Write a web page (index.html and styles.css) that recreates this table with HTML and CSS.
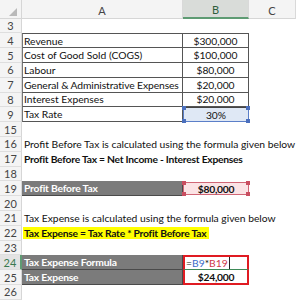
FILE: index.html
```html
<!DOCTYPE html>
<html>
<head>
<meta charset="utf-8">
<link rel="stylesheet" href="styles.css">
</head>
<body>
<div class="sheet">
  <div class="corner"><svg class="tri" width="8" height="8" viewBox="0 0 8 8"><polygon points="8,0 8,8 0,8" fill="#b9b9b9"/></svg></div>
  <div class="colhead">A</div>
  <div class="colhead sel">B</div>
  <div class="colhead">C</div>

  <div class="rh">3</div><div class="c"></div><div class="c"></div><div class="c"></div>
  <div class="rh">4</div><div class="c t la first">Revenue</div><div class="c t first num">$300,000</div><div class="c"></div>
  <div class="rh">5</div><div class="c t la">Cost of Good Sold (COGS)</div><div class="c t num">$100,000</div><div class="c"></div>
  <div class="rh">6</div><div class="c t la">Labour</div><div class="c t num">$80,000</div><div class="c"></div>
  <div class="rh">7</div><div class="c t la tight">General &amp; Administrative Expenses</div><div class="c t num">$20,000</div><div class="c"></div>
  <div class="rh">8</div><div class="c t la">Interest Expenses</div><div class="c t num">$20,000</div><div class="c"></div>
  <div class="rh">9</div><div class="c t la">Tax Rate</div><div class="c num ref-blue">30%<i class="h tl"></i><i class="h tr"></i><i class="h bl"></i><i class="h br"></i></div><div class="c"></div>
  <div class="rh">15</div><div class="c"></div><div class="c"></div><div class="c"></div>
  <div class="rh">16</div><div class="c over">Profit Before Tax is calculated using the formula given below</div><div class="c"></div><div class="c"></div>
  <div class="rh">17</div><div class="c over b">Profit Before Tax = Net Income - Interest Expenses</div><div class="c"></div><div class="c"></div>
  <div class="rh">18</div><div class="c"></div><div class="c"></div><div class="c"></div>
  <div class="rh">19</div><div class="c dark">Profit Before Tax</div><div class="c num b ref-red">$80,000<i class="h tl"></i><i class="h tr"></i><i class="h bl"></i><i class="h br"></i></div><div class="c"></div>
  <div class="rh">20</div><div class="c"></div><div class="c"></div><div class="c"></div>
  <div class="rh">21</div><div class="c over">Tax Expense is calculated using the formula given below</div><div class="c"></div><div class="c"></div>
  <div class="rh">22</div><div class="c over b"><span class="hl">Tax Expense = Tax Rate * Profit Before Tax</span></div><div class="c"></div><div class="c"></div>
  <div class="rh">23</div><div class="c"></div><div class="c"></div><div class="c"></div>
  <div class="rh active">24</div><div class="c dark">Tax Expense Formula</div><div class="c formula red-top"><span class="k">=</span><span class="blue">B9</span><span class="k">*</span><span class="red">B19</span><span class="caret"></span></div><div class="c"></div>
  <div class="rh">25</div><div class="c dark">Tax Expense</div><div class="c num b red-bottom">$24,000</div><div class="c"></div>
  <div class="rh">26</div><div class="c"></div><div class="c"></div><div class="c"></div>
</div>
</body>
</html>
```

FILE: styles.css
```css
html, body {
  margin: 0;
  padding: 0;
  background: #fff;
}
.sheet {
  display: grid;
  grid-template-columns: 22px 161px 66px 47px;
  grid-template-rows: 18.6px repeat(19, 14.8px);
  font-family: "Lato", "Liberation Sans", sans-serif;
  font-size: 10.3px;
  color: #111;
  width: 296px;
  overflow: hidden;
}
.corner {
  background: #f4f4f4;
  border-right: 1px solid #d6d6d6;
  border-bottom: 1px solid #d6d6d6;
  display: flex;
  align-items: flex-end;
  justify-content: flex-end;
  padding: 0 4px 2px 0;
  box-sizing: border-box;
}
.colhead {
  background: #f4f4f4;
  border-right: 1px solid #d9d9d9;
  border-bottom: 1px solid #d6d6d6;
  box-sizing: border-box;
  display: flex;
  align-items: center;
  justify-content: center;
  color: #444;
  font-size: 11px;
  padding-top: 3px;
}
.colhead.sel {
  background: #d9dcd9;
  border-bottom: 2px solid #5e9b73;
  color: #2f5e3c;
}
.rh {
  background: #f4f4f4;
  border-right: 1px solid #d6d6d6;
  border-bottom: 1px solid #dedede;
  box-sizing: border-box;
  display: flex;
  align-items: center;
  justify-content: center;
  color: #444;
  font-size: 11px;
}
.rh.active {
  background: #e3e3e3;
  color: #3a7a50;
  border-right: 2px solid #5e9b73;
}
.c {
  box-sizing: border-box;
  display: flex;
  align-items: center;
  padding: 0 2px;
  white-space: nowrap;
  min-width: 0;
}
.t {
  border-right: 1px solid #555;
  border-bottom: 1px solid #555;
}
.t.first {
  border-top: 1px solid #555;
}
.t.la {
  border-left: 1px solid #777;
  padding-left: 1px;
}
.tight {
  letter-spacing: -0.1px;
}
.b {
  font-weight: bold;
  letter-spacing: -0.25px;
}
.over {
  overflow: visible;
  position: relative;
  z-index: 1;
}
.num {
  justify-content: center;
}
.hl {
  background: #ffff00;
  display: inline-block;
  line-height: 12px;
  margin-left: -1px;
  padding: 0 3px 0 1px;
}
.dark {
  background: #7b7b7b;
  color: #fff;
  font-weight: bold;
  letter-spacing: -0.2px;
  border-bottom: 1px solid #4a4a4a;
  border-right: 1px solid #4a4a4a;
}
.ref-blue, .ref-red {
  position: relative;
}
.ref-blue {
  background: #dfe8f5;
  border: 1px solid #5b7fc8;
  border-top-color: #444;
}
.ref-red {
  background: #fbe3e5;
  border: 1px solid #d06676;
  margin: 1px 0;
}
.h {
  position: absolute;
  width: 4px;
  height: 4px;
}
.ref-blue .h { background: #4a6fbd; }
.ref-red .h { background: #c94e60; }
.h.tl { left: -2px; top: -2px; }
.h.tr { right: -2px; top: -2px; }
.h.bl { left: -2px; bottom: -2px; }
.h.br { right: -2px; bottom: -2px; }
.formula {
  padding-left: 1px;
  letter-spacing: 0;
}
.formula .k { color: #111; }
.formula .blue { color: #3a6cc9; }
.formula .red { color: #d0394a; }
.caret {
  display: inline-block;
  width: 1px;
  height: 12px;
  background: #222;
  margin-left: 1px;
}
.red-top {
  border: 2px solid #e01b22;
  border-bottom: 1px solid #3e8a58;
}
.red-bottom {
  border: 2px solid #e01b22;
  border-top: none;
}
```
